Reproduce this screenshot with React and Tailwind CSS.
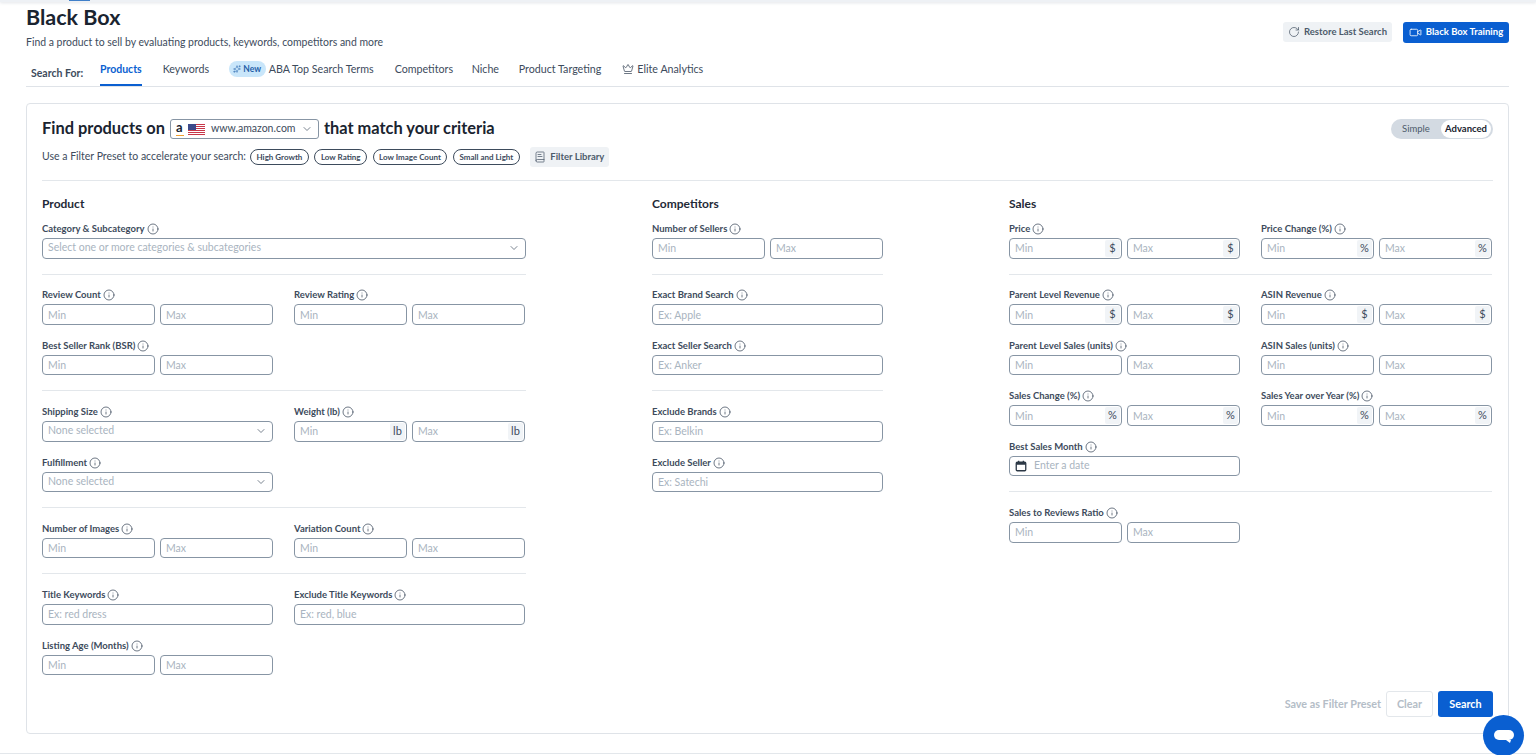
import React from "react";
import { Info, ChevronDown, RotateCw, Video, BookText, Crown, Sparkles } from "lucide-react";

function Label({ text }) {
  return (
    <div className="h-[18px] flex items-start gap-[2px] pt-[3px] text-[9.5px] leading-[12px] font-bold text-[#3d4b5c] whitespace-nowrap">
      <span>{text}</span>
      <Info className="w-[12px] h-[12px] text-[#3d4b5c]" strokeWidth={1.5} />
    </div>
  );
}

function Box({ placeholder, unit, className = "" }) {
  return (
    <div className={"relative flex-1 min-w-0 h-[20.5px] border border-[#8795a4] rounded-[4px] flex items-center bg-white " + className}>
      <input
        readOnly
        placeholder={placeholder}
        className="w-full min-w-0 px-[5px] text-[10.5px] leading-none bg-transparent outline-none placeholder:text-[#a9b4c0]"
      />
      {unit && (
        <span className="absolute right-[1px] top-[1px] bottom-[1px] w-[15px] bg-[#f1f4f7] rounded-[2px] flex items-center justify-center text-[11px] text-[#3d4b5c]">
          {unit}
        </span>
      )}
    </div>
  );
}

function Range({ label, unit }) {
  return (
    <div className="w-[231px]">
      <Label text={label} />
      <div className="flex gap-[5px]">
        <Box placeholder="Min" unit={unit} />
        <Box placeholder="Max" unit={unit} />
      </div>
    </div>
  );
}

function Text({ label, placeholder }) {
  return (
    <div className="w-[231px]">
      <Label text={label} />
      <div className="flex">
        <Box placeholder={placeholder} />
      </div>
    </div>
  );
}

function Select({ label, placeholder, wide }) {
  return (
    <div className={wide ? "w-full" : "w-[231px]"}>
      <Label text={label} />
      <div className="h-[20.5px] border border-[#8795a4] rounded-[4px] flex items-center justify-between px-[5px] text-[10.5px] text-[#a9b4c0]">
        <span>{placeholder}</span>
        <ChevronDown className="w-[12px] h-[12px] text-[#4d5b6b]" strokeWidth={1.5} />
      </div>
    </div>
  );
}

function Stack({ children }) {
  return <div className="flex flex-col gap-[12px]">{children}</div>;
}

function Row({ children }) {
  return <div className="flex gap-[21px]">{children}</div>;
}

function Rule() {
  return <div className="h-px bg-[#e3e7eb] mt-[15px] mb-[11.75px]" />;
}

function Heading({ children }) {
  return <div className="h-[24px] text-[12px] leading-[16px] font-bold text-[#1f2a37]">{children}</div>;
}

function Chip({ children }) {
  return (
    <span className="h-[16px] px-[5.5px] flex items-center border border-[#3d4b5c] rounded-full text-[8px] font-bold text-[#3d4b5c] whitespace-nowrap">
      {children}
    </span>
  );
}

function Tab({ children, active, width = "" }) {
  return (
    <div className={"h-[35px] pt-[10px] leading-[16px] whitespace-nowrap border-b-2 " + width + " " + (active ? "text-[10.5px] border-[#0a5fd1] text-[#0a5fd1] font-bold" : "text-[10.7px] border-transparent text-[#3d4b5c]")}>
      {children}
    </div>
  );
}

function Flag() {
  return (
    <svg width="17" height="11" viewBox="0 0 17 11" className="shrink-0">
      <rect width="17" height="11" fill="#fff" />
      {[0, 2, 4, 6, 8, 10].map((y) => (
        <rect key={y} y={y} width="17" height="1" fill="#c8374a" />
      ))}
      <rect width="8" height="6" fill="#3c4a8a" />
    </svg>
  );
}

function CalendarIcon() {
  return (
    <svg width="12" height="12" viewBox="0 0 12 12" className="shrink-0">
      <rect x="1.25" y="2.25" width="9.5" height="8.5" rx="1" fill="none" stroke="#2c3846" strokeWidth="1.3" />
      <rect x="1.25" y="2.25" width="9.5" height="2.5" fill="#2c3846" />
      <rect x="3" y="0.75" width="1.3" height="2" fill="#2c3846" />
      <rect x="7.7" y="0.75" width="1.3" height="2" fill="#2c3846" />
    </svg>
  );
}

export default function App() {
  return (
    <div className="relative w-[1536px] h-[755px] overflow-hidden bg-white font-['Lato','Noto_Sans',sans-serif] text-[#3d4b5c]">
      <div className="h-[2px] bg-[#eef1f5] shadow-[0_1px_3px_rgba(40,60,90,0.15)] relative">
        <div className="absolute left-[69px] top-0 w-[21px] h-px bg-[#3f7fc9]" />
      </div>

      <div className="pl-[26px] pr-[27px]">
        <div className="flex justify-between items-start">
          <div>
            <div className="h-[30px] pt-[2px] text-[21.5px] leading-[26px] font-bold text-[#1a2430]">Black Box</div>
            <div className="h-[20px] pt-[3px] text-[10.45px] leading-[14px] text-[#3d4b5c]">
              Find a product to sell by evaluating products, keywords, competitors and more
            </div>
          </div>
          <div className="flex gap-[11px] pt-[20px]">
            <div className="h-[20px] w-[109px] rounded-[3px] bg-[#eff2f5] flex items-center pl-[5px] gap-[4px] text-[9.5px] font-bold text-[#4d5b6b]">
              <RotateCw className="w-[12px] h-[12px]" strokeWidth={1.5} />
              Restore Last Search
            </div>
            <div className="h-[21px] w-[106px] rounded-[3px] bg-[#0a5fd1] flex items-center justify-center gap-[4px] text-[9.5px] font-bold text-white">
              <Video className="w-[13px] h-[13px]" strokeWidth={1.5} />
              Black Box Training
            </div>
          </div>
        </div>

        <div className="h-[36px] border-b border-[#dfe3e8] flex items-start -mt-[1px]">
          <div className="w-[74px] pl-[5px] pt-[15px] text-[10.5px] leading-[14px] font-bold text-[#3d4b5c] whitespace-nowrap">Search For:</div>
          <div className="flex gap-[21px]">
            <Tab active>Products</Tab>
            <Tab width="w-[45px]">Keywords</Tab>
            <Tab>
              <span className="flex items-center gap-[3px]">
                <span className="h-[16px] w-[37px] rounded-full bg-[#c9e6fa] flex items-center justify-center gap-[2px] text-[8.5px] font-bold text-[#1f5fa8]">
                  <Sparkles className="w-[8px] h-[8px]" strokeWidth={1.5} />
                  New
                </span>
                ABA Top Search Terms
              </span>
            </Tab>
            <Tab width="w-[56px]">Competitors</Tab>
            <Tab width="w-[26px]">Niche</Tab>
            <Tab>Product Targeting</Tab>
            <Tab>
              <span className="flex items-center gap-[3px]">
                <Crown className="w-[12px] h-[12px]" strokeWidth={1.5} />
                Elite Analytics
              </span>
            </Tab>
          </div>
        </div>

        <div className="mt-[16px] h-[631px] border border-[#dfe3e8] rounded-[4px] px-[15px] pt-[15px] relative">
          <div className="flex justify-between items-center h-[20px]">
            <div className="flex items-center gap-[5px] text-[16.4px] font-bold text-[#1a2430] whitespace-nowrap">
              <span className="pb-[2px]">Find products on</span>
              <span className="h-[20px] w-[149px] border border-[#8795a4] rounded-[3px] flex items-center px-[5px] gap-[4px] text-[10.5px] font-normal text-[#3d4b5c]">
                <span className="relative w-[8px] pb-[3px] text-[13px] leading-none font-bold text-[#1a2430]">
                  a
                  <span className="absolute left-0 bottom-[1px] w-[8px] h-px bg-[#f0a030]" />
                </span>
                <Flag />
                <span className="ml-[2px]">www.amazon.com</span>
                <ChevronDown className="ml-auto w-[12px] h-[12px] text-[#4d5b6b]" strokeWidth={1.5} />
              </span>
              <span className="pb-[2px]">that match your criteria</span>
            </div>
            <div className="h-[20px] w-[102px] rounded-full bg-[#d3dae2] flex items-center text-[9.5px]">
              <span className="w-[50px] text-center text-[#4d5b6b]">Simple</span>
              <span className="w-[50px] h-[18px] rounded-full bg-white flex items-center justify-center font-bold text-[#1a2430]">Advanced</span>
            </div>
          </div>

          <div className="flex items-center h-[20px] mt-[8px] text-[10.5px] text-[#3d4b5c] whitespace-nowrap">
            <span className="w-[208px]">Use a Filter Preset to accelerate your search:</span>
            <div className="flex gap-[5.5px]">
              <Chip>High Growth</Chip>
              <Chip>Low Rating</Chip>
              <Chip>Low Image Count</Chip>
              <Chip>Small and Light</Chip>
            </div>
            <span className="ml-[10px] h-[20px] w-[79px] rounded-[3px] bg-[#eff2f5] flex items-center justify-center gap-[4px] text-[9.5px] font-bold text-[#4d5b6b]">
              <BookText className="w-[12px] h-[12px]" strokeWidth={1.5} />
              Filter Library
            </span>
          </div>

          <div className="h-px bg-[#e3e7eb] mt-[13px] mb-[15px]" />

          <div className="flex gap-[126px]">
            <div className="w-[484px]">
              <Heading>Product</Heading>
              <Select wide label="Category & Subcategory" placeholder="Select one or more categories & subcategories" />
              <Rule />
              <Stack>
                <Row>
                  <Range label="Review Count" />
                  <Range label="Review Rating" />
                </Row>
                <Range label="Best Seller Rank (BSR)" />
              </Stack>
              <Rule />
              <Stack>
                <Row>
                  <Select label="Shipping Size" placeholder="None selected" />
                  <Range label="Weight (lb)" unit="lb" />
                </Row>
                <Select label="Fulfillment" placeholder="None selected" />
              </Stack>
              <Rule />
              <Row>
                <Range label="Number of Images" />
                <Range label="Variation Count" />
              </Row>
              <Rule />
              <Stack>
                <Row>
                  <Text label="Title Keywords" placeholder="Ex: red dress" />
                  <Text label="Exclude Title Keywords" placeholder="Ex: red, blue" />
                </Row>
                <Range label="Listing Age (Months)" />
              </Stack>
            </div>

            <div className="w-[231px]">
              <Heading>Competitors</Heading>
              <Range label="Number of Sellers" />
              <Rule />
              <Stack>
                <Text label="Exact Brand Search" placeholder="Ex: Apple" />
                <Text label="Exact Seller Search" placeholder="Ex: Anker" />
              </Stack>
              <Rule />
              <Stack>
                <Text label="Exclude Brands" placeholder="Ex: Belkin" />
                <Text label="Exclude Seller" placeholder="Ex: Satechi" />
              </Stack>
            </div>

            <div className="w-[483px]">
              <Heading>Sales</Heading>
              <Row>
                <Range label="Price" unit="$" />
                <Range label="Price Change (%)" unit="%" />
              </Row>
              <Rule />
              <div className="mb-[1px]">
                <Stack>
                  <Row>
                    <Range label="Parent Level Revenue" unit="$" />
                    <Range label="ASIN Revenue" unit="$" />
                  </Row>
                  <Row>
                    <Range label="Parent Level Sales (units)" />
                    <Range label="ASIN Sales (units)" />
                  </Row>
                  <Row>
                    <Range label="Sales Change (%)" unit="%" />
                    <Range label="Sales Year over Year (%)" unit="%" />
                  </Row>
                  <div className="w-[231px]">
                    <Label text="Best Sales Month" />
                    <div className="h-[20.5px] border border-[#8795a4] rounded-[4px] flex items-center pl-[5px] gap-[7px] text-[10.5px] text-[#a9b4c0]">
                      <CalendarIcon />
                      Enter a date
                    </div>
                  </div>
                </Stack>
              </div>
              <Rule />
              <Range label="Sales to Reviews Ratio" />
            </div>
          </div>

          <div className="absolute right-[15px] bottom-[16px] flex items-center text-[10.8px] font-bold">
            <span className="text-[#b4bdc7] mr-[5px]">Save as Filter Preset</span>
            <span className="h-[26px] w-[47px] border border-[#e3e7eb] rounded-[3px] flex items-center justify-center text-[#b4bdc7]">Clear</span>
            <span className="ml-[5px] h-[26px] w-[55px] rounded-[3px] bg-[#0a5fd1] flex items-center justify-center text-white">Search</span>
          </div>
        </div>
      </div>

      <div className="absolute left-0 right-0 top-[753px] h-px bg-[#e3e7eb]" />

      <div className="absolute left-[1483px] top-[715px] w-[41px] h-[41px] rounded-full bg-[#0a5fd1] flex items-center justify-center">
        <svg width="22" height="18" viewBox="0 0 22 18">
          <rect x="1" y="3" width="20" height="10" rx="5" fill="#fff" />
          <path d="M13 13h5l-1 3z" fill="#fff" />
        </svg>
      </div>
    </div>
  );
}
